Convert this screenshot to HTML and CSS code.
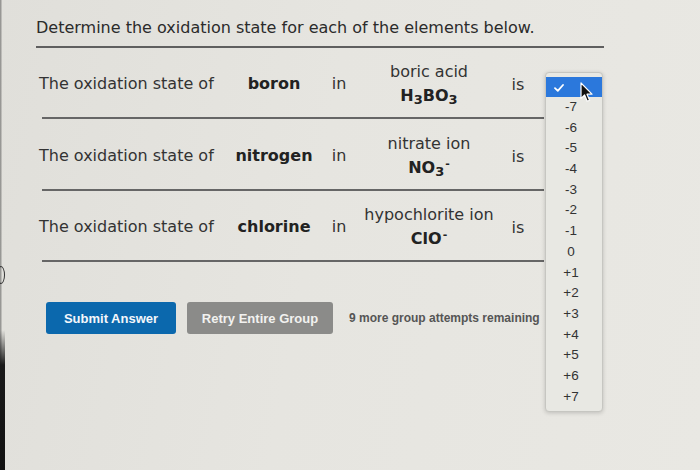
FILE: index.html
```html
<!DOCTYPE html>
<html lang="en">
<head>
<meta charset="utf-8">
<title>Oxidation states</title>
<link rel="stylesheet" href="styles.css">
</head>
<body>
<div class="page">
  <div class="edge"></div>
  <h1 class="title">Determine the oxidation state for each of the elements below.</h1>
  <div class="rows">
    <div class="row">
      <span class="lead">The oxidation state of</span>
      <span class="el">boron</span>
      <span class="in">in</span>
      <span class="cmp"><span class="name">boric acid</span><span class="formula">H<sub>3</sub>BO<sub>3</sub></span></span>
      <span class="is">is</span>
    </div>
    <div class="row">
      <span class="lead">The oxidation state of</span>
      <span class="el">nitrogen</span>
      <span class="in">in</span>
      <span class="cmp"><span class="name">nitrate ion</span><span class="formula">NO<sub>3</sub><sup>-</sup></span></span>
      <span class="is">is</span>
    </div>
    <div class="row">
      <span class="lead">The oxidation state of</span>
      <span class="el">chlorine</span>
      <span class="in">in</span>
      <span class="cmp"><span class="name">hypochlorite ion</span><span class="formula">ClO<sup>-</sup></span></span>
      <span class="is">is</span>
    </div>
  </div>
  <div class="actions">
    <button class="btn btn-submit">Submit Answer</button>
    <button class="btn btn-retry">Retry Entire Group</button>
    <span class="remaining">9 more group attempts remaining</span>
  </div>

  <div class="dropdown">
    <div class="opt selected">
      <svg class="check" width="10" height="8" viewBox="0 0 10 8"><path d="M1 4.2 L3.8 6.8 L9 1" fill="none" stroke="#fff" stroke-width="1.8" stroke-linecap="round" stroke-linejoin="round"/></svg>
      <svg class="cursor" width="14" height="21" viewBox="0 0 14 21"><path d="M1 1 L1 16.5 L4.6 13 L7.2 19.2 L9.6 18.2 L7 12.2 L12 12.2 Z" fill="#111" stroke="#fff" stroke-width="1.2" stroke-linejoin="round"/></svg>
    </div>
    <div class="opt">-7</div>
    <div class="opt">-6</div>
    <div class="opt">-5</div>
    <div class="opt">-4</div>
    <div class="opt">-3</div>
    <div class="opt">-2</div>
    <div class="opt">-1</div>
    <div class="opt">0</div>
    <div class="opt">+1</div>
    <div class="opt">+2</div>
    <div class="opt">+3</div>
    <div class="opt">+4</div>
    <div class="opt">+5</div>
    <div class="opt">+6</div>
    <div class="opt">+7</div>
  </div>
</div>
</body>
</html>
```

FILE: styles.css
```css
html, body {
  margin: 0;
  padding: 0;
}
body {
  width: 700px;
  height: 470px;
  overflow: hidden;
  background: #e5e4df;
  font-family: "DejaVu Sans", Verdana, sans-serif;
  color: #333;
}
.page {
  position: relative;
  width: 700px;
  height: 470px;
  padding-top: 18px;
  box-sizing: border-box;
  background: linear-gradient(100deg, #e0dfda 0%, #e6e5e0 45%, #e9e8e3 100%);
}
.edge {
  position: absolute;
  left: 0;
  top: 0;
  bottom: 0;
  width: 5px;
  background: linear-gradient(90deg, rgba(80,80,80,0.5) 0px, rgba(80,80,80,0.5) 1px, transparent 2px);
}
.edge::after {
  content: "";
  position: absolute;
  left: 0;
  top: 330px;
  bottom: 0;
  width: 5px;
  background: linear-gradient(180deg, rgba(20,20,20,0) 0%, #1a1a1a 25%, #111 100%);
}
.edge::before {
  content: "";
  position: absolute;
  left: -3px;
  top: 266px;
  width: 6px;
  height: 16px;
  border-radius: 50%;
  border: 1.5px solid #333;
}
.title {
  margin: 0 0 0 36px;
  width: 568px;
  padding-bottom: 8px;
  border-bottom: 2px solid #5f5f5f;
  font-size: 16px;
  font-weight: normal;
  line-height: 20px;
  color: #2b2b2b;
}
.rows {
  margin-left: 42px;
  width: 502px;
}
.row {
  display: grid;
  grid-template-columns: 187px 90px 40px 140px 38px 7px;
  align-items: center;
  min-height: 66px;
  padding-top: 3px;
  border-bottom: 2px solid #666;
  font-size: 16px;
  line-height: 24px;
}
.row:first-child {
  min-height: 66px;
}
.row:nth-child(2) {
  min-height: 67px;
}
.lead {
  white-space: nowrap;
  margin-left: -3px;
}
.el {
  font-weight: bold;
  text-align: center;
  color: #222;
}
.in, .is {
  text-align: center;
}
.is {
  padding-top: 2px;
}
.cmp {
  display: flex;
  flex-direction: column;
  align-items: center;
  white-space: nowrap;
}
.formula {
  font-weight: bold;
  color: #222;
}
.formula sub {
  font-size: 13px;
  vertical-align: -3px;
  line-height: 0;
}
.formula sup {
  font-size: 11px;
  vertical-align: 6px;
  line-height: 0;
  margin-left: 1px;
}
.actions {
  display: flex;
  align-items: center;
  gap: 11px;
  margin: 40px 0 0 46px;
  font-family: "Liberation Sans", Arial, sans-serif;
}
.btn {
  height: 32px;
  border: none;
  border-radius: 3px;
  font-family: "Liberation Sans", Arial, sans-serif;
  font-size: 13px;
  font-weight: bold;
  padding: 0;
}
.btn-submit {
  width: 130px;
  background: #0b68ad;
  color: #f4f7fb;
}
.btn-retry {
  width: 146px;
  background: #8b8b89;
  color: #f2f2f0;
}
.remaining {
  margin-left: 5px;
  font-size: 12px;
  font-weight: bold;
  color: #555;
  white-space: nowrap;
}
.dropdown {
  position: absolute;
  left: 545px;
  top: 72px;
  width: 58px;
  padding: 4px 0;
  box-sizing: border-box;
  background: #e8e8e3;
  border: 1px solid #c6c6c1;
  border-radius: 4px;
  box-shadow: 0 1px 4px rgba(0,0,0,0.18);
  font-family: "Liberation Sans", Arial, sans-serif;
  font-size: 13.5px;
  color: #333;
}
.opt {
  height: 20.7px;
  line-height: 20.7px;
  text-align: center;
  padding-right: 6px;
}
.opt.selected {
  position: relative;
  height: 20px;
  background: #2b78dc;
}
.check {
  position: absolute;
  left: 8px;
  top: 7px;
}
.cursor {
  position: absolute;
  left: 34px;
  top: 5px;
}
```
